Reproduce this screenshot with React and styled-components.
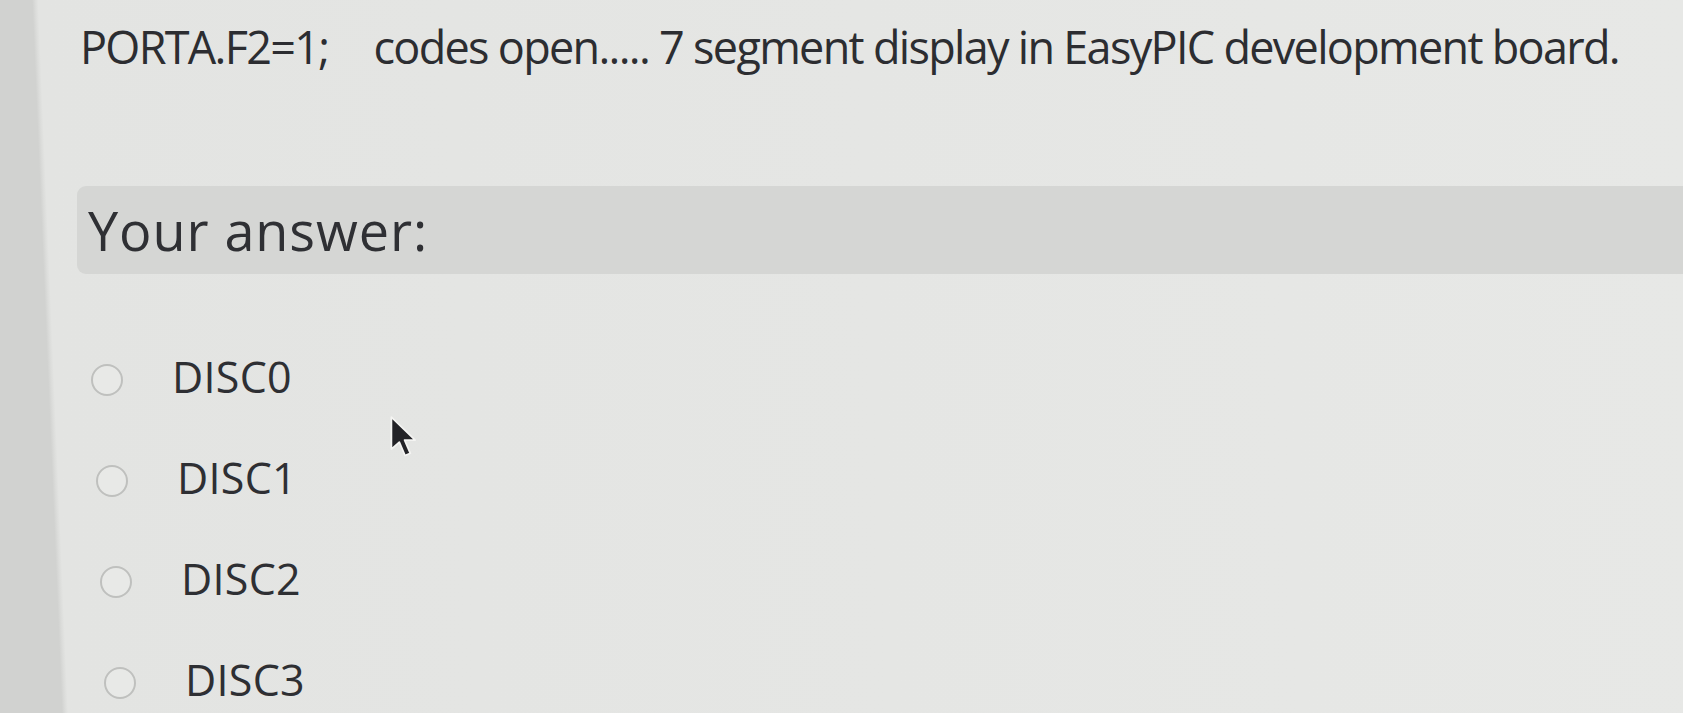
import React from 'react'
import styled, { createGlobalStyle } from 'styled-components'

const GlobalStyle = createGlobalStyle`
  html, body {
    margin: 0;
    padding: 0;
    overflow: hidden;
  }
  body {
    font-family: "Open Sans", "Noto Sans", sans-serif;
    color: #2e2f33;
  }
`

// the left edge of the screen is a slightly darker strip that widens downward (photo angle)
const Page = styled.div`
  position: relative;
  width: 1683px;
  height: 713px;
  overflow: hidden;
  background: linear-gradient(87.6deg, #d1d2d0 0 62px, #dbdcda 65px, #e3e4e2 68px, #e7e8e6 100%);
  padding: 16px 0 0 77px;
  box-sizing: border-box;
`

const Question = styled.h1`
  margin: 0 0 0 3px;
  font-size: 45px;
  line-height: 61px;
  font-weight: 400;
  letter-spacing: -1.7px;
  white-space: pre;
  color: #2c2d31;
`

const Gap = styled.span`
  display: inline-block;
  width: 45px;
`

const AnswerBar = styled.div`
  margin: 109px -20px 0 0;
  height: 88px;
  padding: 8px 11px 0;
  box-sizing: border-box;
  background: #d5d6d4;
  border-radius: 9px 0 0 9px;
`

const AnswerLabel = styled.span`
  font-size: 54px;
  line-height: 73px;
  letter-spacing: 0.9px;
  color: #2f3034;
`

const Options = styled.div`
  display: flex;
  flex-direction: column;
  margin-top: 52px;
`

const Option = styled.label`
  display: flex;
  align-items: center;
  height: 101px;
  padding-left: ${({ shift }) => 14 + shift}px;
  gap: 49px;
  cursor: pointer;
`

const Radio = styled.span`
  width: 28px;
  height: 28px;
  margin-top: 6px;
  border: 2.5px solid #bfc0be;
  border-radius: 50%;
  background: #e8e9e7;
`

const OptionText = styled.span`
  font-size: 43px;
  line-height: 58px;
  letter-spacing: 0.3px;
  color: #2e2f33;
`

const Pointer = styled.svg`
  position: absolute;
  left: 389px;
  top: 415px;
  width: 29px;
  height: 44px;
`

const options = ['DISC0', 'DISC1', 'DISC2', 'DISC3']
const shifts = [0, 5, 9, 13]

export default function App() {
  return (
    <>
      <GlobalStyle />
      <Page>
        <Question>
          PORTA.F2=1;<Gap />codes open..... 7 segment display in EasyPIC development board.
        </Question>

        <AnswerBar>
          <AnswerLabel>Your answer:</AnswerLabel>
        </AnswerBar>

        <Options>
          {options.map((opt, i) => (
            <Option key={opt} shift={shifts[i]}>
              <Radio />
              <OptionText>{opt}</OptionText>
            </Option>
          ))}
        </Options>

        <Pointer viewBox="0 0 13 20">
          <path
            d="M1 1 L1 15.5 L4.6 12.3 L7.2 18.4 L9.6 17.4 L7 11.4 L11.8 11.4 Z"
            fill="#232327"
            stroke="#f4f4f2"
            strokeWidth="0.8"
            strokeLinejoin="round"
          />
        </Pointer>
      </Page>
    </>
  )
}
